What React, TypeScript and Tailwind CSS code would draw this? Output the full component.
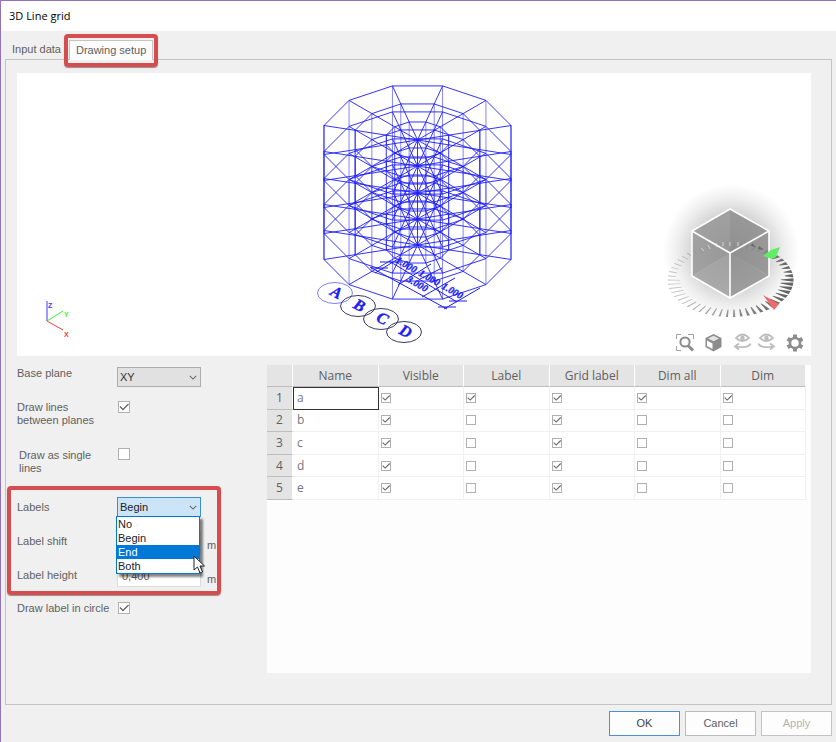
import clsx from "clsx";
import { ReactNode, useId, useState } from "react";

const BLUE = "#1c1cf8";
const LEVELS = [140, 166, 193, 219, 245];
const RINGS = [1 / 3, 2 / 3, 1];
const CENTER_X = 417.5;

const COLUMNS = ["Name", "Visible", "Label", "Grid label", "Dim all", "Dim"];
const ROWS = [
  { name: "a", checks: [true, true, true, true, true] },
  { name: "b", checks: [true, false, true, false, false] },
  { name: "c", checks: [true, false, true, false, false] },
  { name: "d", checks: [true, false, true, false, false] },
  { name: "e", checks: [true, false, true, false, false] },
];

const LABEL_OPTIONS = ["No", "Begin", "End", "Both"];

const LABEL_CIRCLES = [
  { letter: "A", x: 335, y: 293, stroke: "#8080ee" },
  { letter: "B", x: 358, y: 306, stroke: "#3a3a66" },
  { letter: "C", x: 381, y: 319, stroke: "#3a3a66" },
  { letter: "D", x: 404, y: 332, stroke: "#3a3a66" },
];

// Twelve corners of one ring, projected on a plane at height cy
function ringPoints(cy: number, scale: number) {
  return Array.from({ length: 12 }, (_, i) => {
    const angle = ((15 + i * 30) * Math.PI) / 180;
    return [
      CENTER_X + 96.8 * scale * Math.cos(angle),
      cy + 56 * scale * Math.sin(angle),
    ];
  });
}

function WireFrame() {
  const top = LEVELS[0];
  const height = LEVELS[LEVELS.length - 1] - top;
  return (
    <g stroke={BLUE} strokeWidth="0.9" fill="none">
      {LEVELS.map((cy) => (
        <g key={cy}>
          {RINGS.map((ring) => (
            <polygon
              key={ring}
              points={ringPoints(cy, ring)
                .map((p) => p.join(","))
                .join(" ")}
            />
          ))}
          {ringPoints(cy, 1).map(([x, y]) => (
            <line key={`${x}-${y}`} x1={CENTER_X} y1={cy} x2={x} y2={y} />
          ))}
        </g>
      ))}
      {RINGS.map((ring) =>
        ringPoints(top, ring).map(([x, y]) => (
          <line
            key={`${x}-${y}`}
            x1={x}
            y1={y}
            x2={x}
            y2={y + height}
            strokeOpacity="0.6"
          />
        ))
      )}
      <line x1={CENTER_X} y1={top} x2={CENTER_X} y2={top + height} />
    </g>
  );
}

function Dimensions() {
  return (
    <g>
      <path
        fill="none"
        stroke={BLUE}
        d="M389 261L457 302M370 267L447 309M380 262H403M371 268H388M438 307H456M449 301H467M444 309L480 288M375 273L398 259M398 285L431 264M422 297L455 278M420 279L442 268"
      />
      <g
        fill={BLUE}
        stroke={BLUE}
        strokeWidth="0.3"
        fontFamily="'Liberation Serif', serif"
        fontStyle="italic"
        fontWeight="bold"
        fontSize="10"
      >
        <text transform="translate(395 262) rotate(30)">1.000</text>
        <text transform="translate(418 275) rotate(30)">1.000</text>
        <text transform="translate(441 288) rotate(30)">1.000</text>
        <text transform="translate(406 281) rotate(30)">3.000</text>
      </g>
    </g>
  );
}

// Compass ring: wedges get wider and darker towards the right side
function CompassTicks() {
  const count = 54;
  return (
    <g>
      {Array.from({ length: count }, (_, i) => {
        const angle = (i * 2 * Math.PI) / count;
        const side = (Math.cos(angle - 0.1) + 1) / 2;
        const spread = 0.012 + 0.035 * side ** 3;
        const grey = Math.round(195 - 95 * side);
        const inner = Math.sin(angle) < 0 ? 0.87 : 0.8;
        const point = (a: number, r: number) =>
          `${730.5 + 63 * r * Math.cos(a)},${280 + 37 * r * Math.sin(a)}`;
        return (
          <polygon
            key={i}
            fill={`rgb(${grey},${grey},${grey})`}
            points={[
              point(angle - 0.02, inner),
              point(angle - spread, 1),
              point(angle + spread, 1),
              point(angle, inner),
            ].join(" ")}
          />
        );
      })}
    </g>
  );
}

function NavigationCube() {
  return (
    <g>
      <circle cx="731" cy="252" r="68" fill="url(#halo)" />
      <CompassTicks />
      <g fillOpacity="0.8">
        <polygon points="730,209 692,231 692,276 730,253" fill="#949494" />
        <polygon points="730,209 769,231 769,276 730,253" fill="#898989" />
        <polygon points="730,253 692,276 730,298" fill="#9d9d9d" />
        <polygon points="730,253 769,276 730,298" fill="#8f8f8f" />
      </g>
      {/* Far ticks showing through the glass */}
      <path
        d="M701 248L704 251M708 245L710 249M716 243L717 247M723 242V246M730 242V246M738 242V246"
        stroke="#d4d4d4"
      />
      <path d="M752 243L756 247L751 246ZM759 246L764 250L758 249Z" fill="#6a6a6a" />
      <path
        d="M730 209L769 231V276L730 298L692 276V231ZM692 231L730 253L769 231M730 253V298"
        fill="none"
        stroke="#fff"
        strokeWidth="1.6"
        strokeLinejoin="round"
      />
      <polygon points="763,256 771,250 780,247 776,257 772,259" fill="#5fec67" />
      <polygon points="763,295 779,304 774,310" fill="#f0696b" />
    </g>
  );
}

function ViewTools() {
  return (
    <g>
      <g fill="none" stroke="#8c8c8c">
        <path
          d="M676.5 339V334.500H681M688 334.500H693.500V339M676.500 346V350.500H681"
          stroke="#a0a0a0"
        />
        <circle cx="685" cy="342" r="4.600" strokeWidth="2" />
        <path d="M688.500 346L693 350.500" strokeWidth="3" />
      </g>
      <path d="M713.500 334L721.500 338V347L713.500 351.500L705.500 347V338Z" fill="#8c8c8c" />
      <path d="M707 340.500L712.500 343.500V349L707 346Z" fill="#fff" />
      <path d="M708 338.500L713.500 335.800L719 338.500L713.500 341.200Z" fill="#e4e4e4" />
      {[742.5, 766.5].map((x, i) => (
        <g key={x} fill="none" stroke="#bdbdbd" strokeWidth="1.800">
          <path d={`M${x - 6.5} 338Q${x} 331 ${x + 6.5} 338Q${x} 344 ${x - 6.5} 338Z`} />
          <circle cx={x} cy="338" r="2.300" fill="#bdbdbd" stroke="none" />
          {i === 0 ? (
            <path d="M750.500 343.500C750 347 742 348 736 346.500M739 343.500L735 346.500L739 349.500" />
          ) : (
            <path d="M758.500 343.500C759 347 767 348 773 346.500M770 343.500L774 346.500L770 349.500" />
          )}
        </g>
      ))}
      <g stroke="#8c8c8c" fill="none" strokeWidth="2.5">
        <circle cx="795" cy="343" r="5" />
        {[0, 60, 120, 180, 240, 300].map((deg) => (
          <path key={deg} d="M795 338V334.500" strokeWidth="4" transform={`rotate(${deg} 795 343)`} />
        ))}
      </g>
    </g>
  );
}

function Preview() {
  return (
    <svg
      viewBox="17 73 794 283"
      className="block w-full bg-white"
      role="img"
      aria-label="Line grid preview"
    >
      <defs>
        <radialGradient id="halo">
          <stop offset="0" stopColor="#a8a8a8" />
          <stop offset="0.5" stopColor="#cfcfcf" />
          <stop offset="0.8" stopColor="#efefef" />
          <stop offset="1" stopColor="#fff" />
        </radialGradient>
      </defs>
      <WireFrame />
      <Dimensions />
      {LABEL_CIRCLES.map(({ letter, x, y, stroke }) => (
        <g key={letter}>
          <ellipse cx={x} cy={y} rx="17.500" ry="10.500" fill="none" stroke={stroke} />
          <text
            transform={`translate(${x - 1} ${y + 4}) rotate(28)`}
            textAnchor="middle"
            fill={BLUE}
            stroke={BLUE}
            strokeWidth="0.400"
            fontFamily="'Liberation Serif', serif"
            fontWeight="bold"
            fontStyle="italic"
            fontSize="16"
          >
            {letter}
          </text>
        </g>
      ))}
      {/* Axes */}
      <g fontFamily="'Liberation Sans', sans-serif" fontSize="7" fontWeight="bold">
        <path d="M47 301V321" stroke="#3c3cf5" />
        <path d="M47 321L63 311" stroke="#3cf03c" />
        <path d="M47 321L63 330" stroke="#f53c3c" />
        <text x="48" y="308" fill="#3c3cf5">Z</text>
        <text x="64" y="317" fill="#3cf03c">Y</text>
        <text x="64" y="337" fill="#f53c3c">X</text>
      </g>
      <NavigationCube />
      <ViewTools />
    </svg>
  );
}

type CheckboxProps = {
  label: string;
  defaultChecked: boolean;
  id?: string;
  small?: boolean;
};

function Checkbox({ label, defaultChecked, id, small }: CheckboxProps) {
  return (
    <span className={clsx("relative block", small ? "size-[10px]" : "ml-px size-3")}>
      <input
        id={id}
        type="checkbox"
        aria-label={label}
        defaultChecked={defaultChecked}
        className="peer block size-full appearance-none border border-[#b0b0b0] bg-white"
      />
      <svg
        viewBox="0 0 12 12"
        className="pointer-events-none invisible absolute inset-0 peer-checked:visible"
        aria-hidden="true"
      >
        <path d="M2 5.500L5 8.500L10.500 3" fill="none" stroke="#666" strokeWidth="1.300" />
      </svg>
    </span>
  );
}

function Chevron() {
  return (
    <svg
      viewBox="0 0 10 6"
      className="pointer-events-none absolute right-1 top-2 w-2"
      aria-hidden="true"
    >
      <path d="M1 1L5 5L9 1" fill="none" stroke="#666" strokeWidth="1.300" />
    </svg>
  );
}

function Cursor() {
  return (
    <svg
      viewBox="0 0 12 19"
      className="pointer-events-none absolute -right-1 top-[58px] z-20 w-3"
      aria-hidden="true"
    >
      <path
        d="M1 1V15L4.500 12L7 18L9.500 17L7 11H11.500Z"
        fill="#fff"
        stroke="#222"
        strokeWidth="1"
      />
    </svg>
  );
}

type FieldProps = {
  label: string;
  className?: string;
  labelClassName?: string;
  children: (id: string) => ReactNode;
};

function Field({ label, className, labelClassName, children }: FieldProps) {
  const id = useId();
  return (
    <div className={clsx("flex items-start", className)}>
      <label htmlFor={id} className={clsx("w-[100px] shrink-0", labelClassName)}>
        {label}
      </label>
      {children(id)}
    </div>
  );
}

function LabelsSelect({ id }: { id: string }) {
  const [value, setValue] = useState("Begin");
  const [highlighted, setHighlighted] = useState("End");
  return (
    <div className="relative">
      <select
        id={id}
        value={value}
        onChange={(e) => setValue(e.target.value)}
        className="block h-5 w-[84px] appearance-none border border-[#3c8dd0] bg-[#cce4f7] px-[2px] text-[#222]"
      >
        {LABEL_OPTIONS.map((option) => (
          <option key={option}>{option}</option>
        ))}
      </select>
      <Chevron />
      <ul
        role="listbox"
        aria-label="Labels"
        className="absolute -left-px top-[19px] z-10 w-[84px] border border-[#0078d7] bg-white leading-[14px] text-[#222] shadow-[3px_3px_2px_#00000077]"
      >
        {LABEL_OPTIONS.map((option) => (
          <li
            key={option}
            role="option"
            aria-selected={option === highlighted}
            onMouseEnter={() => setHighlighted(option)}
            onClick={() => setValue(option)}
            className={clsx(
              "px-px",
              option === highlighted && "bg-[#0078d7] text-white"
            )}
          >
            {option}
          </li>
        ))}
      </ul>
      <Cursor />
    </div>
  );
}

function SetupForm() {
  return (
    <form className="w-[250px] shrink-0 pt-[11px] text-[11px] leading-[13px] text-[#606060]">
      <Field label="Base plane" className="h-[34px]">
        {(id) => (
          <div className="relative">
            <select
              id={id}
              className="block h-5 w-[84px] appearance-none border border-[#adadad] bg-[#e1e1e1] px-[2px] text-[#333]"
            >
              <option>XY</option>
            </select>
            <Chevron />
          </div>
        )}
      </Field>
      <Field label="Draw lines between planes" className="h-[47px]" labelClassName="pr-4">
        {(id) => <Checkbox id={id} label="Draw lines between planes" defaultChecked />}
      </Field>
      <Field
        label="Draw as single lines"
        className="h-[49px]"
        labelClassName="pl-[2px] pr-4 pt-px"
      >
        {(id) => (
          <Checkbox id={id} label="Draw as single lines" defaultChecked={false} />
        )}
      </Field>
      <div className="relative">
        <Field label="Labels" className="h-[34px]" labelClassName="pt-1">
          {(id) => <LabelsSelect id={id} />}
        </Field>
        <Field label="Label shift" className="h-[34px]" labelClassName="pt-1">
          {(id) => (
            <>
              <input
                id={id}
                className="h-[22px] w-[84px] border border-[#dcdcdc] bg-white px-1"
              />
              <span className="pl-[6px] pt-2">m</span>
            </>
          )}
        </Field>
        <Field label="Label height" className="h-[37px]" labelClassName="pt-1">
          {(id) => (
            <>
              <input
                id={id}
                defaultValue="0,400"
                className="h-[22px] w-[84px] border border-[#dcdcdc] bg-white px-1"
              />
              <span className="pl-[6px] pt-2">m</span>
            </>
          )}
        </Field>
        {/* Callout frame around the label settings */}
        <div className="pointer-events-none absolute -left-[10px] -top-[11px] h-[109px] w-[214px] rounded-[4px] border-4 border-[#d64d4f] shadow-[0_1px_1px_#00000066]" />
      </div>
      <Field label="Draw label in circle">
        {(id) => <Checkbox id={id} label="Draw label in circle" defaultChecked />}
      </Field>
    </form>
  );
}

function GridTable() {
  return (
    <table className="h-[135px] w-full table-fixed border-separate border-spacing-0 font-['Open_Sans',sans-serif] text-[12px] leading-[16px] text-[#606060]">
      <thead>
        <tr>
          <th
            aria-label="Row"
            className="h-[22px] w-[26px] border-b border-r border-b-[#bdbdbd] border-r-white bg-[#e4e4e4] p-0"
          />
          {COLUMNS.map((column) => (
            <th
              key={column}
              className="h-[22px] border-b border-r border-b-[#bdbdbd] border-r-white bg-[#e4e4e4] p-0 font-normal"
            >
              {column}
            </th>
          ))}
        </tr>
      </thead>
      <tbody>
        {ROWS.map((row, index) => (
          <tr key={row.name}>
            <th className="border-b border-r border-b-[#bdbdbd] border-r-white bg-[#e4e4e4] p-0 font-normal">
              {index + 1}
            </th>
            <td
              className={clsx(
                "border-b border-r border-[#f0f0f0] bg-white p-0 pl-1 text-[#777]",
                index === 0 && "outline outline-1 -outline-offset-1 outline-[#333]"
              )}
            >
              {row.name}
            </td>
            {row.checks.map((checked, i) => (
              <td
                key={COLUMNS[i + 1]}
                className="border-b border-r border-[#f0f0f0] bg-white p-0 pl-[2px]"
              >
                <Checkbox
                  small
                  label={`${COLUMNS[i + 1]} ${row.name}`}
                  defaultChecked={checked}
                />
              </td>
            ))}
          </tr>
        ))}
      </tbody>
    </table>
  );
}

function Tabs() {
  return (
    <div
      role="tablist"
      className="flex h-7 items-end pl-[11px] text-[11px] leading-[13px] text-[#606060]"
    >
      <button type="button" role="tab" aria-selected={false} className="pb-[3px]">
        Input data
      </button>
      <div className="relative ml-2">
        <button
          type="button"
          role="tab"
          aria-selected
          className="relative z-10 -mb-px block h-5 border border-b-0 border-[#c4c4c4] bg-[#fcfcfc] px-[6px]"
        >
          Drawing setup
        </button>
        {/* Callout frame around the active tab */}
        <div className="pointer-events-none absolute -inset-x-[5px] -bottom-2 -top-[6px] z-20 rounded-[4px] border-4 border-[#d64d4f] shadow-[0_1px_1px_#00000066]" />
      </div>
    </div>
  );
}

const BUTTON =
  "h-[25px] w-[71px] border bg-[#fdfdfd] text-[11px] leading-[13px]";

export default function App() {
  return (
    <div className="flex min-h-screen flex-col border-l border-t border-[#9272bd] bg-[#f0f0f0] font-['Liberation_Sans',sans-serif]">
      <h1 className="h-[30px] bg-white pl-2 font-['Open_Sans',sans-serif] text-[11px] leading-[30px] text-black">
        3D Line grid
      </h1>
      <Tabs />
      <main className="ml-1 mr-1 flex-1 border border-[#c4c4c4] pb-[30px] pl-[11px] pr-5 pt-[13px]">
        <Preview />
        <div className="flex">
          <SetupForm />
          <div className="mt-[9px] min-h-[308px] min-w-0 flex-1 bg-[#fdfdfd] pr-[5px]">
            <GridTable />
          </div>
        </div>
      </main>
      <footer className="flex justify-end gap-[5px] pb-[6px] pr-1 pt-[6px]">
        <button type="button" className={clsx(BUTTON, "border-[#4a90d9] text-[#444]")}>
          OK
        </button>
        <button type="button" className={clsx(BUTTON, "border-[#bcbcbc] text-[#606060]")}>
          Cancel
        </button>
        <button
          type="button"
          disabled
          className={clsx(BUTTON, "border-[#c4c4c4] text-[#b4b4b4]")}
        >
          Apply
        </button>
      </footer>
    </div>
  );
}
